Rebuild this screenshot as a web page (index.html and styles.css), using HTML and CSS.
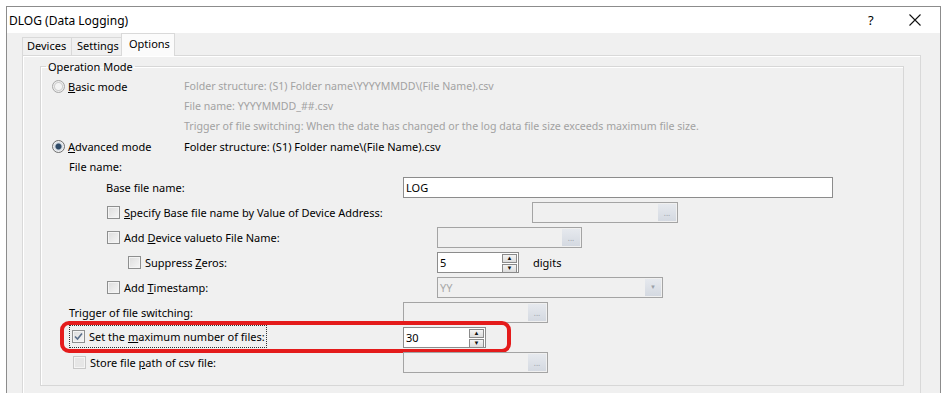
FILE: index.html
```html
<!DOCTYPE html>
<html lang="en">
<head>
  <meta charset="UTF-8" />
  <meta name="viewport" content="width=device-width, initial-scale=1.0"/>
  <title>DLOG (Data Logging)</title>
  <link rel="stylesheet" href="styles.css">
</head>
<body>
<div class="window">
  <!-- title bar -->
  <div class="titlebar">
    <span class="title">DLOG (Data Logging)</span>
    <span class="help">?</span>
    <span class="close">
      <svg width="12" height="12" viewBox="0 0 12 12"><path d="M0.5 0.5 L11.5 11.5 M11.5 0.5 L0.5 11.5" stroke="#111" stroke-width="1.1" fill="none"/></svg>
    </span>
  </div>

  <div class="client">
    <div class="tabs">
      <div class="tab">Devices</div>
      <div class="tab">Settings</div>
      <div class="tab active">Options</div>
    </div>

    <div class="panel">
      <fieldset class="group">
        <legend>Operation Mode</legend>

        <div class="row r20 in-radio">
          <span class="choice"><span class="radio"></span><span><u>B</u>asic mode</span></span>
          <span class="desc">Folder structure: (S1) Folder name\YYYYMMDD\(File Name).csv</span>
        </div>
        <div class="row r20 in-desc">
          <span class="desc">File name: YYYYMMDD_##.csv</span>
        </div>
        <div class="row r20 in-desc">
          <span class="desc">Trigger of file switching: When the date has changed or the log data file size exceeds maximum file size.</span>
        </div>
        <div class="row r21 in-radio">
          <span class="choice"><span class="radio checked"></span><span><u>A</u>dvanced mode</span></span>
          <span>Folder structure: (S1) Folder name\(File Name).csv</span>
        </div>
        <div class="row r18 in-1">
          <span>File name:</span>
        </div>

        <div class="row in-2">
          <span class="cell w297">Base file name:</span>
          <div class="field w430 enabled"><span class="val">LOG</span></div>
        </div>
        <div class="row in-2b">
          <span class="cell w425"><span class="cb"></span><span><u>S</u>pecify Base file name by Value of Device Address:</span></span>
          <div class="field w146"><span class="val"></span><span class="browse">...</span></div>
        </div>
        <div class="row in-2b">
          <span class="cell w330"><span class="cb"></span><span>Add <u>D</u>evice valueto File Name:</span></span>
          <div class="field w145"><span class="val"></span><span class="browse">...</span></div>
        </div>
        <div class="row in-3">
          <span class="cell w309"><span class="cb"></span><span>Suppress <u>Z</u>eros:</span></span>
          <div class="field w82 enabled">
            <span class="val">5</span>
            <span class="spin"><span class="up">&#9650;</span><span class="down">&#9660;</span></span>
          </div>
          <span class="unit">digits</span>
        </div>
        <div class="row in-2b">
          <span class="cell w330"><span class="cb"></span><span>Add <u>T</u>imestamp:</span></span>
          <div class="field w226"><span class="val dim">YY</span><span class="drop">&#9660;</span></div>
        </div>
        <div class="row in-1">
          <span class="cell w334">Trigger of file switching:</span>
          <div class="field w145"><span class="val"></span><span class="browse">...</span></div>
        </div>
        <div class="row in-1 marked">
          <span class="cell w334"><span class="focus"><span class="cb checked"><svg width="9" height="9" viewBox="0 0 9 9"><path d="M1 4.5 L3.5 7 L8 1.5" stroke="#5b6f8a" stroke-width="1.6" fill="none"/></svg></span><span>Set the <u>m</u>aximum number of files:</span></span></span>
          <div class="field w83 enabled">
            <span class="val">30</span>
            <span class="spin"><span class="up">&#9650;</span><span class="down">&#9660;</span></span>
          </div>
          <div class="highlight"></div>
        </div>
        <div class="row in-1c">
          <span class="cell w330"><span class="cb faint"></span><span>Store file <u>p</u>ath of csv file:</span></span>
          <div class="field w145"><span class="val"></span><span class="browse">...</span></div>
        </div>
      </fieldset>
    </div>
  </div>
</div>
</body>
</html>
```

FILE: styles.css
```css
body {
  margin: 0;
  height: 393px;
  overflow: hidden;
  background: #fff;
  font-family: "Noto Sans", sans-serif;
  font-size: 11px;
  color: #000;
}
.window {
  margin: 6px 5px 0 6px;
  border: 1px solid #8c8c8c;
  border-bottom: none;
  height: 420px;
  background: #f0f0f0;
}
.titlebar {
  height: 26px;
  background: #fff;
  display: flex;
  align-items: center;
}
.title {
  font-size: 12px;
  padding-left: 2px;
  flex: 1;
}
.help {
  font-size: 13px;
  width: 20px;
  margin-right: 21px;
}
.close {
  width: 31px;
  display: flex;
}
.client {
  padding: 0 19px 0 15px;
}
.tabs {
  display: flex;
  align-items: flex-end;
  height: 22px;
}
.tab {
  height: 17px;
  line-height: 16px;
  padding: 0 4px;
  border: 1px solid #d9d9d9;
  border-bottom: none;
  margin-right: -1px;
}
.tab:first-child { width: 40px; }
.tab:nth-child(2) { width: 41px; padding-left: 5px; }
.tab.active {
  height: 22px;
  line-height: 20px;
  padding: 0 7px;
  width: 38px;
  background: #fbfbfb;
  margin-bottom: -1px;
  margin-left: -1px;
  position: relative;
}
.panel {
  border: 1px solid #d9d9d9;
  box-shadow: inset 1px 1px 0 #fff;
  padding: 3px 16px 20px 17px;
  height: 360px;
}
.group {
  margin: 0;
  padding: 2px 0 10px 0;
  border: 1px solid #d7d7d7;
  box-shadow: 1px 1px 0 #fff inset;
}
.group legend {
  margin-left: 5px;
  padding: 0 2px;
  line-height: 15px;
}
.row {
  display: flex;
  align-items: center;
  height: 25px;
  position: relative;
  white-space: nowrap;
}
.r20 { height: 20px; }
.r21 { height: 21px; }
.r18 { height: 18px; }
.in-radio { padding-left: 11px; }
.in-desc { padding-left: 143px; }
.in-1 { padding-left: 28px; }
.in-1c { padding-left: 32px; }
.in-2 { padding-left: 65px; }
.in-2b { padding-left: 66px; }
.in-3 { padding-left: 87px; }

.choice {
  width: 132px;
  display: flex;
  align-items: center;
  gap: 3px;
}
.desc {
  color: #a2a2a2;
  font-size: 10.6px;
}

.radio {
  width: 11px;
  height: 11px;
  border: 1px solid #a8a8a8;
  border-radius: 50%;
  background: radial-gradient(circle, #f4f4f4 0, #f4f4f4 3px, #cfcfcf 4px, #ececec 5px);
  flex: none;
}
.radio.checked {
  border-color: #6e6e6e;
  background: radial-gradient(circle, #2f4b68 0, #2f4b68 2.5px, #cfd6de 3.5px, #eef0f2 5px);
}

.cell {
  display: flex;
  align-items: center;
  flex: none;
}
.cb {
  width: 11px;
  height: 11px;
  border: 1px solid #8e8f8f;
  background: linear-gradient(135deg, #dcdcdc, #f6f6f6);
  box-shadow: inset 0 0 0 1px #f4f4f4;
  margin-right: 4px;
  flex: none;
  display: flex;
  align-items: center;
  justify-content: center;
}
.cb.faint { border-color: #c8c8c8; background: #e6e6e6; }
.focus {
  display: flex;
  align-items: center;
  border: 1px dotted #333;
  padding: 3px 1px 3px 2px;
  margin-top: -3px;
}
.w297 { width: 297px; }
.w425 { width: 425px; }
.w330 { width: 330px; }
.w309 { width: 309px; }
.w334 { width: 334px; }

.field {
  box-sizing: border-box;
  height: 21px;
  border: 1px solid #a4a4a4;
  background: #f0f0f0;
  display: flex;
  align-items: stretch;
  padding: 1px;
  flex: none;
}
.field.enabled {
  border-color: #8c8c8c;
  background: #fff;
}
.w430 { width: 430px; }
.w146 { width: 146px; }
.w145 { width: 145px; }
.w82 { width: 82px; }
.w83 { width: 83px; }
.w226 { width: 226px; }
.val {
  flex: 1;
  line-height: 17px;
  padding-left: 1px;
}
.val.dim { color: #a8a8a8; }
.browse, .drop {
  width: 18px;
  background: linear-gradient(#e6e9ee, #d4d9e1);
  color: #9aa0a8;
  font-size: 8px;
  text-align: center;
  line-height: 18px;
}
.drop {
  width: 16px;
  font-size: 6px;
  line-height: 17px;
}
.spin {
  width: 15px;
  display: flex;
  flex-direction: column;
  gap: 1px;
}
.spin span {
  flex: 1;
  border: 1px solid #8a8a8a;
  background: linear-gradient(#f4f4f4, #dcdcdc);
  font-size: 6px;
  line-height: 7px;
  text-align: center;
  color: #111;
}
.unit { margin-left: 14px; }

.highlight {
  position: absolute;
  left: 19px;
  top: -4px;
  width: 451px;
  height: 32px;
  box-sizing: border-box;
  border: 4px solid #e41b1b;
  border-radius: 9px;
}
```
